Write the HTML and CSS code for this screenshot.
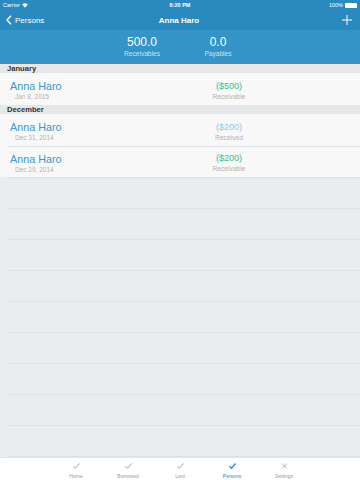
FILE: index.html
```html
<!DOCTYPE html>
<html lang="en">
<head>
    <meta charset="UTF-8">
    <meta name="viewport" content="width=device-width, initial-scale=1.0">
    <title>Anna Haro</title>
    <link rel="stylesheet" href="styles.css">
</head>
<body>
    <div class="app">
        <div class="top">
            <div class="status">
                <span class="carrier">Carrier
                    <svg width="6" height="5" viewBox="0 0 12 10"><path d="M6 9.5L0.5 3.2A8 8 0 0 1 11.5 3.2Z" fill="#fff"/></svg>
                </span>
                <span class="clock">8:20 PM</span>
                <span class="battery">100%
                    <span class="batt"></span>
                </span>
            </div>
            <div class="navbar">
                <a class="back">
                    <svg width="6" height="10" viewBox="0 0 6 10"><path d="M5 0.8L1 5L5 9.2" fill="none" stroke="#fff" stroke-width="1.4"/></svg>
                    Persons
                </a>
                <span class="title">Anna Haro</span>
                <svg class="plus" width="10" height="10" viewBox="0 0 10 10"><path d="M5 0V10M0 5H10" stroke="#fff" stroke-width="1"/></svg>
            </div>
        </div>

        <div class="summary">
            <div class="sum-item">
                <div class="sum-value">500.0</div>
                <div class="sum-label">Receivables</div>
            </div>
            <div class="sum-item">
                <div class="sum-value">0.0</div>
                <div class="sum-label">Payables</div>
            </div>
        </div>

        <div class="list">
            <div class="section">January</div>
            <div class="row">
                <div class="who">
                    <div class="name">Anna Haro</div>
                    <div class="date">Jan 8, 2015</div>
                </div>
                <div class="money">
                    <div class="amount green">($500)</div>
                    <div class="kind">Receivable</div>
                </div>
            </div>

            <div class="section">December</div>
            <div class="row">
                <div class="who">
                    <div class="name">Anna Haro</div>
                    <div class="date">Dec 31, 2014</div>
                </div>
                <div class="money">
                    <div class="amount light">($200)</div>
                    <div class="kind">Received</div>
                </div>
            </div>
            <div class="row">
                <div class="who">
                    <div class="name">Anna Haro</div>
                    <div class="date">Dec 29, 2014</div>
                </div>
                <div class="money">
                    <div class="amount green">($200)</div>
                    <div class="kind">Receivable</div>
                </div>
            </div>

            <div class="filler"><div class="lines"></div></div>
        </div>

        <div class="tabbar">
            <div class="tab">
                <svg width="7" height="6" viewBox="0 0 7 6"><path d="M0.5 3.2L2.5 5.3L6.5 0.5" fill="none" stroke="#8e8e8e" stroke-width="0.8"/></svg>
                <span>Home</span>
            </div>
            <div class="tab">
                <svg width="7" height="6" viewBox="0 0 7 6"><path d="M0.5 3.2L2.5 5.3L6.5 0.5" fill="none" stroke="#8e8e8e" stroke-width="0.8"/></svg>
                <span>Borrowed</span>
            </div>
            <div class="tab">
                <svg width="7" height="6" viewBox="0 0 7 6"><path d="M0.5 3.2L2.5 5.3L6.5 0.5" fill="none" stroke="#8e8e8e" stroke-width="0.8"/></svg>
                <span>Lent</span>
            </div>
            <div class="tab active">
                <svg width="7" height="6" viewBox="0 0 7 6"><path d="M0.5 3.2L2.5 5.3L6.5 0.5" fill="none" stroke="#1c8ad0" stroke-width="1.3"/></svg>
                <span>Persons</span>
            </div>
            <div class="tab">
                <svg width="7" height="6" viewBox="0 0 7 7"><path d="M0.7 0.7L6.3 6.3M6.3 0.7L0.7 6.3" fill="none" stroke="#8e8e8e" stroke-width="0.8"/></svg>
                <span>Settings</span>
            </div>
        </div>
    </div>
</body>
</html>
```

FILE: styles.css
```css
* {
    box-sizing: border-box;
}

body {
    margin: 0;
    font-family: "Liberation Sans", Arial, sans-serif;
    background-color: #e9edf0;
}

.app {
    width: 360px;
    height: 480px;
    display: flex;
    flex-direction: column;
    overflow: hidden;
}

/* top bar */
.top {
    background-color: #2a8abf;
    color: #fff;
    height: 30px;
}

.status {
    height: 10px;
    display: flex;
    justify-content: space-between;
    align-items: center;
    padding: 0 3px;
    font-size: 5.5px;
}

.carrier,
.battery {
    display: flex;
    align-items: center;
    gap: 2px;
    width: 40px;
}

.battery {
    justify-content: flex-end;
}

.clock {
    font-weight: bold;
}

.batt {
    width: 12px;
    height: 5px;
    background-color: #fff;
    border-radius: 1px;
}

.navbar {
    height: 20px;
    display: flex;
    align-items: center;
    justify-content: space-between;
    padding: 0 8px 0 6px;
    font-size: 8px;
}

.back {
    display: flex;
    align-items: center;
    gap: 3px;
    width: 60px;
}

.title {
    font-weight: bold;
}

.plus {
    margin-left: 50px;
}

/* summary */
.summary {
    background-color: #3494c7;
    color: #fff;
    height: 34px;
    display: flex;
    justify-content: center;
    padding-top: 6px;
}

.sum-item {
    width: 76px;
    text-align: center;
}

.sum-value {
    font-size: 12px;
    line-height: 13px;
}

.sum-label {
    font-size: 6.6px;
    line-height: 9px;
    color: rgba(255, 255, 255, 0.75);
}

/* list */
.list {
    flex: 1;
    display: flex;
    flex-direction: column;
}

.section {
    background-color: #e6e7e8;
    height: 9px;
    line-height: 9px;
    padding-left: 7px;
    font-size: 7.6px;
    font-weight: bold;
    color: #333;
}

.row {
    background-color: #f8f8f8;
    height: 32px;
    display: grid;
    grid-template-columns: 160px 118px;
    align-items: center;
    padding: 3px 0 0 10px;
}

.row + .row {
    height: 31px;
    background: linear-gradient(#e1e5e8, #e1e5e8) no-repeat 8px 0 / 100% 1px, #f8f8f8;
}

.name {
    font-size: 10.8px;
    color: #3a9ad2;
    line-height: 12px;
}

.date {
    font-size: 6.5px;
    color: #b4b4b4;
    padding-left: 5px;
    line-height: 9px;
}

.money {
    text-align: center;
}

.amount {
    font-size: 9px;
    line-height: 11px;
}

.green {
    color: #2fc48c;
}

.light {
    color: #8fcbef;
}

.kind {
    font-size: 6.7px;
    color: #b4b4b4;
    line-height: 9px;
}

.filler {
    flex: 1;
    background-color: #e9edf0;
    padding-left: 8px;
}

.lines {
    height: 100%;
    border-top: 1px solid #dde2e6;
    background: repeating-linear-gradient(to bottom, transparent 0, transparent 30px, #dde2e6 30px, #dde2e6 31px);
}

/* tab bar */
.tabbar {
    height: 23px;
    background-color: #fff;
    border-top: 1px solid #e3e3e3;
    display: flex;
    justify-content: center;
}

.tab {
    width: 52px;
    display: flex;
    flex-direction: column;
    align-items: center;
    padding-top: 5px;
    gap: 4px;
    font-size: 5px;
    color: #9a9a9a;
}

.tab.active {
    color: #1c8ad0;
}
```
